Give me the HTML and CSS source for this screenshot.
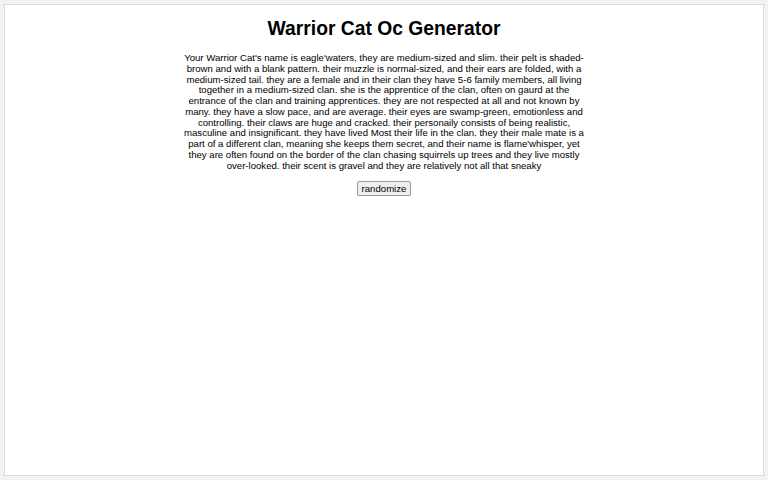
FILE: index.html
```html
<!DOCTYPE html>
<html lang="en">
<head>
<meta charset="utf-8">
<title>Warrior Cat Oc Generator</title>
<link rel="stylesheet" href="styles.css">
</head>
<body>
<main class="frame">
  <h1 class="title">Warrior Cat Oc Generator</h1>
  <p class="story">Your Warrior Cat's name is eagle'waters, they are medium-sized and slim. their pelt is shaded-brown and with a blank pattern. their muzzle is normal-sized, and their ears are folded, with a medium-sized tail. they are a female and in their clan they have 5-6 family members, all living together in a medium-sized clan. she is the apprentice of the clan, often on gaurd at the entrance of the clan and training apprentices. they are not respected at all and not known by many. they have a slow pace, and are average. their eyes are swamp-green, emotionless and controlling. their claws are huge and cracked. their personaily consists of being realistic, masculine and insignificant. they have lived Most their life in the clan. they their male mate is a part of a different clan, meaning she keeps them secret, and their name is flame'whisper, yet they are often found on the border of the clan chasing squirrels up trees and they live mostly over-looked. their scent is gravel and they are relatively not all that sneaky</p>
  <button class="randomize" type="button">randomize</button>
</main>
</body>
</html>
```

FILE: styles.css
```css
html, body {
  margin: 0;
  height: 100%;
}

body {
  background: #f2f2f2;
  padding: 4px;
  box-sizing: border-box;
  font-family: "Liberation Sans", Arial, sans-serif;
}

.frame {
  height: 100%;
  box-sizing: border-box;
  background: #fff;
  border: 1px solid #dcdcdc;
  display: flex;
  flex-direction: column;
  align-items: center;
  padding-top: 12px;
}

.title {
  margin: 0;
  font-size: 19.3px;
  font-weight: bold;
  color: #000;
  line-height: 23px;
}

.story {
  margin: 13px 0 0;
  width: 400px;
  font-size: 9.6px;
  line-height: 10.75px;
  text-align: center;
  color: #000;
}

.randomize {
  margin-top: 10px;
  font-family: "Liberation Sans", Arial, sans-serif;
  font-size: 9.6px;
  padding: 1px 4px;
  background: #efefef;
  border: 1px solid #999;
  border-radius: 2px;
  color: #000;
}
```
